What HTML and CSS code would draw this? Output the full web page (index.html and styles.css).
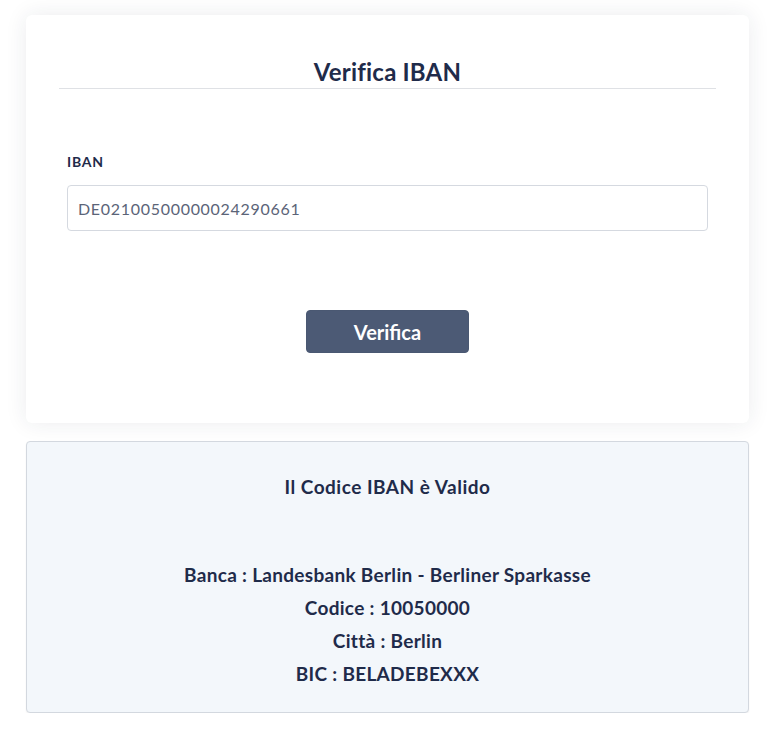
FILE: index.html
```html
<!DOCTYPE html>
<html lang="it">
<head>
<meta charset="utf-8">
<title>Verifica IBAN</title>
<link rel="stylesheet" href="styles.css">
</head>
<body>
<main class="page">
  <section class="card">
    <h1 class="card-title">Verifica IBAN</h1>
    <form class="form">
      <label class="label" for="iban">IBAN</label>
      <input class="input" id="iban" type="text" value="DE02100500000024290661">
      <div class="actions">
        <button class="btn" type="button">Verifica</button>
      </div>
    </form>
  </section>
  <section class="result">
    <p class="result-title">Il Codice IBAN è Valido</p>
    <div class="result-lines">
      <p class="line">Banca : Landesbank Berlin - Berliner Sparkasse</p>
      <p class="line">Codice : 10050000</p>
      <p class="line">Città : Berlin</p>
      <p class="line">BIC : BELADEBEXXX</p>
    </div>
  </section>
</main>
</body>
</html>
```
FILE: styles.css
```css
* { box-sizing: border-box; }
html, body { margin: 0; padding: 0; background: #ffffff; }
body {
  font-family: Lato, "Open Sans", "Liberation Sans", sans-serif;
  color: #1f2b4a;
}
.page {
  width: 723px;
  margin-left: 26px;
  padding-top: 15px;
  display: flex;
  flex-direction: column;
  gap: 18px;
}
.card {
  background: #ffffff;
  border-radius: 6px;
  box-shadow: 0 0 22px rgba(30, 40, 70, 0.09);
  padding: 41px 0 70px;
}
.card-title {
  margin: 0 33px;
  font-size: 24px;
  line-height: 32px;
  font-weight: 700;
  letter-spacing: 0.2px;
  text-align: center;
  color: #1f2b4a;
  border-bottom: 1px solid #dfe1e5;
}
.form {
  padding: 65px 41px 0;
  display: flex;
  flex-direction: column;
}
.label {
  font-size: 14px;
  line-height: 16px;
  font-weight: 700;
  letter-spacing: 0.8px;
  color: #1f2b4a;
}
.input {
  margin-top: 15px;
  height: 46px;
  width: 100%;
  border: 1px solid #d5d9e0;
  border-radius: 4px;
  padding: 0 10px;
  font-family: Lato, "Open Sans", sans-serif;
  font-size: 16px;
  letter-spacing: 0.7px;
  color: #5b6478;
  background: #fff;
  outline: none;
}
.actions {
  display: flex;
  justify-content: center;
  margin-top: 79px;
}
.btn {
  width: 163px;
  height: 43px;
  border: 1px solid #4a5872;
  border-radius: 4px;
  background: #4c5a75;
  color: #ffffff;
  font-family: Lato, "Open Sans", sans-serif;
  font-size: 20px;
  font-weight: 700;
  cursor: pointer;
}
.result {
  background: #f3f7fb;
  border: 1px solid #d3d8df;
  border-radius: 4px;
  box-shadow: 0 1px 2px rgba(0, 0, 0, 0.06);
  padding: 35px 20px 22px;
  text-align: center;
}
.result-title {
  margin: 0;
  font-size: 19px;
  line-height: 20px;
  font-weight: 700;
  letter-spacing: 0.5px;
  color: #1f2b4a;
}
.result-lines {
  margin-top: 61px;
}
.line {
  margin: 0;
  font-size: 19px;
  line-height: 33px;
  font-weight: 700;
  letter-spacing: 0.3px;
  color: #1f2b4a;
}
```
